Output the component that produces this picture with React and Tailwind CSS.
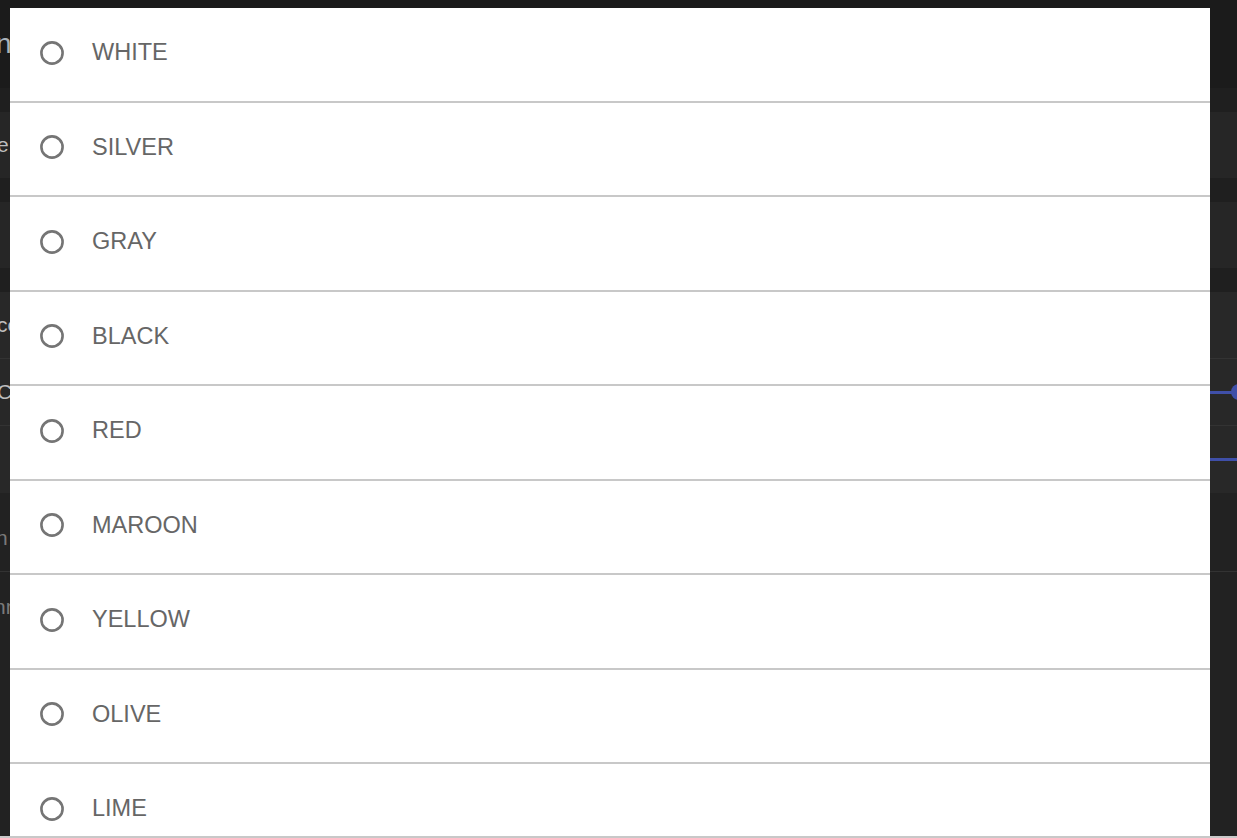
import React from 'react';

const colors = ['WHITE', 'SILVER', 'GRAY', 'BLACK', 'RED', 'MAROON', 'YELLOW', 'OLIVE', 'LIME'];

function RadioIcon() {
  return (
    <svg width="26" height="26" viewBox="0 0 26 26" className="shrink-0">
      <circle cx="13" cy="13" r="10.6" fill="none" stroke="#757575" strokeWidth="2.6" />
    </svg>
  );
}

function Slider({ thumb }) {
  return (
    <div className="relative ml-auto w-[320px] h-[3px] bg-[#3f4fa8] -mr-[6px]">
      {thumb && <div className="absolute -right-[4px] -top-[7px] w-[16px] h-[16px] rounded-full bg-[#3f4fa8]" />}
    </div>
  );
}

export default function App() {
  return (
    <div className="relative w-[1237px] h-[838px] overflow-hidden bg-[#222222]" style={{ fontFamily: '"Liberation Sans", Arial, sans-serif' }}>
      {/* page behind the dialog */}
      <div className="flex flex-col">
        <div className="h-[88px] bg-[#1b1b1b] flex items-center">
          <span className="-ml-[4px] text-[28px] text-[#a9b3bb]">n</span>
        </div>
        <div className="h-[24px] bg-[#1f1f1f]" />
        <div className="h-[66px] bg-[#262626] flex items-center">
          <span className="-ml-[3px] text-[21px] text-[#bdbdbd]">e</span>
        </div>
        <div className="h-[24px] bg-[#1f1f1f]" />
        <div className="h-[66px] bg-[#262626]" />
        <div className="h-[24px] bg-[#1f1f1f]" />
        <div className="bg-[#282828] flex flex-col">
          <div className="h-[67px] flex items-center border-b border-[#333333]">
            <span className="-ml-[3px] text-[21px] text-[#bdbdbd]">co</span>
          </div>
          <div className="h-[67px] flex items-center border-b border-[#333333]">
            <span className="-ml-[3px] text-[21px] text-[#bdbdbd]">C</span>
            <Slider thumb />
          </div>
          <div className="h-[67px] flex items-center">
            <Slider />
          </div>
        </div>
        <div className="flex flex-col">
          <div className="h-[79px] flex items-end pb-[18px] border-b border-[#333333]">
            <span className="-ml-[4px] text-[21px] text-[#7a7a7a]">n</span>
          </div>
          <div className="h-[70px] flex items-center">
            <span className="-ml-[6px] text-[21px] text-[#7a7a7a]">nn</span>
          </div>
        </div>
      </div>

      {/* dialog */}
      <div className="absolute left-[10px] top-[8px] w-[1200px] h-[828px] bg-white overflow-hidden">
        {colors.map((c) => (
          <div
            key={c}
            className="h-[94.5px] flex items-center gap-[27px] pl-[29px] pb-[3px] border-b-2 border-[#c8c8c8]"
          >
            <RadioIcon />
            <span className="text-[23.5px] leading-none text-[#666666]">{c}</span>
          </div>
        ))}
      </div>
      <div className="absolute left-0 right-0 top-[836px] h-[2px] bg-[#c8c8c8]" />
    </div>
  );
}
